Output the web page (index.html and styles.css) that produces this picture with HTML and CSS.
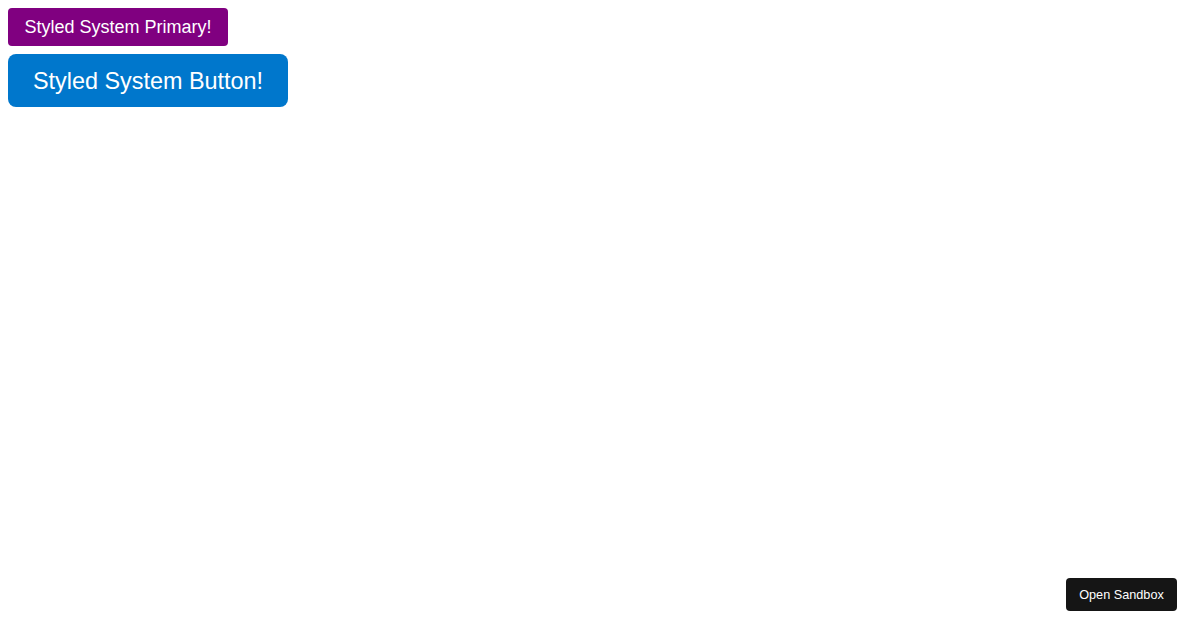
FILE: index.html
```html
<!DOCTYPE html>
<html>
<head>
<meta charset="utf-8">
<link rel="stylesheet" href="styles.css">
</head>
<body>
<div class="stack">
  <button class="btn btn-primary">Styled System Primary!</button>
  <button class="btn btn-large">Styled System Button!</button>
</div>
<a class="sandbox-link">Open Sandbox</a>
</body>
</html>
```

FILE: styles.css
```css
html, body {
  margin: 0;
  padding: 0;
  background: #fff;
}

body {
  padding: 8px;
  font-family: "Liberation Sans", Arial, sans-serif;
}

.stack {
  display: flex;
  flex-direction: column;
  align-items: flex-start;
  gap: 8px;
}

.btn {
  border: 0;
  color: #fff;
  font-family: "Liberation Sans", Arial, sans-serif;
  line-height: 1;
  cursor: pointer;
}

.btn-primary {
  background: #800080;
  font-size: 18px;
  padding: 0 16.5px;
  height: 38px;
  border-radius: 4px;
}

.btn-large {
  background: #0077cc;
  font-size: 23.4px;
  padding: 2px 24px 0;
  width: 280px;
  height: 53px;
  border-radius: 8px;
}

.sandbox-link {
  position: fixed;
  right: 23px;
  bottom: 19px;
  width: 111px;
  height: 33px;
  box-sizing: border-box;
  display: flex;
  align-items: center;
  justify-content: center;
  background: #151515;
  color: #fff;
  border-radius: 4px;
  font-family: "Liberation Sans", Arial, sans-serif;
  font-size: 12.7px;
}
```
